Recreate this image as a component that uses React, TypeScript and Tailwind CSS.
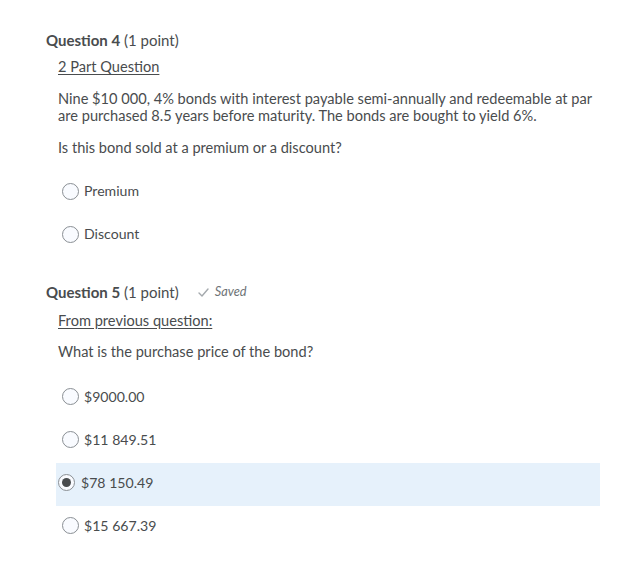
import React from "react";

const TEXT = "text-[#494c4e]";

function Radio({ checked }: { checked?: boolean }) {
  return (
    <span className="flex h-[17px] w-[17px] shrink-0 items-center justify-center rounded-full border border-[#8a8f94] bg-[#f9fbff]">
      {checked && <span className="h-[9px] w-[9px] rounded-full bg-[#494c4e]" />}
    </span>
  );
}

function Option({ label, checked, h }: { label: string; checked?: boolean; h: string }) {
  return (
    <div className={`flex items-center ${h} ${checked ? "bg-[#e6f1fb] pl-[2px]" : "pl-[6px]"}`}>
      <Radio checked={checked} />
      <span className={checked ? "ml-[6px]" : "ml-[5px]"}>{label}</span>
    </div>
  );
}

export default function App() {
  return (
    <div
      className={`min-h-screen bg-white pt-[30px] pl-[46px] pr-[44px] text-[14.1px] ${TEXT}`}
      style={{ fontFamily: "Lato, 'Open Sans', Arial, sans-serif" }}
    >
      {/* Question 4 */}
      <h2 className="h-[20px] text-[15px] leading-[20px]">
        <span className="font-bold">Question 4</span> (1 point)
      </h2>
      <div className="ml-[12px] text-[14.6px]">
        <p className="mt-[7px] leading-[20px] underline underline-offset-2">2 Part Question</p>
        <p className="mt-[13px] leading-[17px]">
          Nine $10 000, 4% bonds with interest payable semi-annually and redeemable at par are purchased 8.5 years
          before maturity. The bonds are bought to yield 6%.
        </p>
        <p className="mt-[14px] leading-[20px]">Is this bond sold at a premium or a discount?</p>
      </div>
      <div className="mt-[11px] ml-[10px]">
        <Option label="Premium" h="h-[44px]" />
        <Option label="Discount" h="h-[44px] pb-[2px]" />
      </div>

      {/* Question 5 */}
      <div className="mt-[25px] flex h-[20px] items-center">
        <h2 className="text-[15px] leading-[20px]">
          <span className="font-bold">Question 5</span> (1 point)
        </h2>
        <span className="ml-[19px] flex items-center text-[12.8px] italic text-[#6e7376]">
          <svg width="11" height="9" viewBox="0 0 11 9" className="mr-[6px]">
            <path d="M1 5 L4 8 L10 1" fill="none" stroke="#a4a9ad" strokeWidth="1.4" strokeLinecap="round" strokeLinejoin="round" />
          </svg>
          Saved
        </span>
      </div>
      <div className="ml-[12px] text-[14.6px]">
        <p className="mt-[9px] leading-[20px] underline underline-offset-2">From previous question:</p>
        <p className="mt-[11px] leading-[20px]">What is the purchase price of the bond?</p>
      </div>
      <div className="mt-[15px] ml-[10px]">
        <Option label="$9000.00" h="h-[43px] pb-[4px]" />
        <Option label="$11 849.51" h="h-[43px] pb-[4px]" />
        <Option label="$78 150.49" h="h-[43px] pb-[4px]" checked />
        <Option label="$15 667.39" h="h-[43px] pb-[4px]" />
      </div>
    </div>
  );
}
